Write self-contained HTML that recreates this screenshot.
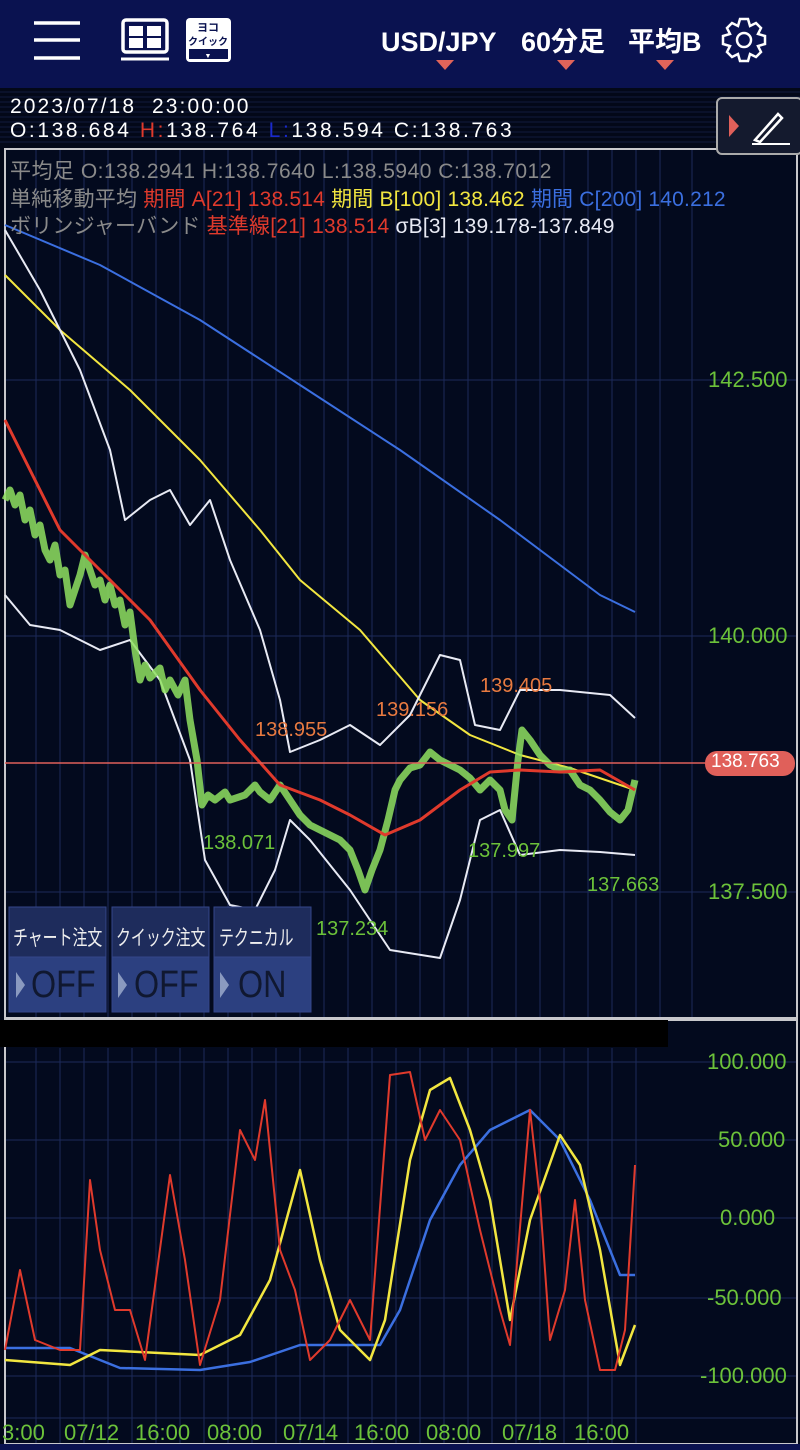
<!DOCTYPE html>
<html><head><meta charset="utf-8"><style>
html,body{margin:0;padding:0;width:800px;height:1450px;overflow:hidden;background:#030818;font-family:"Liberation Sans","Noto Sans CJK JP",sans-serif}
.hdr{position:absolute;left:0;top:0;width:800px;height:88px;background:#0a1250}
.t{position:absolute;white-space:nowrap}
.ax{position:absolute;white-space:nowrap;font-size:22px;color:#6cc23a}
.bt{position:absolute;white-space:nowrap;font-size:21px;color:#eee;transform:scaleX(0.71);transform-origin:left top}
.tm{position:absolute;top:1420px;font-size:22px;color:#6cc23a;white-space:nowrap}
</style></head><body>
<div class="hdr"></div>
<svg width="800" height="1450" style="position:absolute;left:0;top:0">
<g stroke="#fff" stroke-width="3.5"><line x1="34" y1="23" x2="80" y2="23"/><line x1="34" y1="40" x2="80" y2="40"/><line x1="34" y1="58" x2="80" y2="58"/></g>
<rect x="123" y="20" width="44" height="32" rx="3" fill="none" stroke="#fff" stroke-width="3.5"/>
<rect x="129" y="26" width="14" height="10" fill="#fff"/><rect x="147" y="26" width="14" height="10" fill="#fff"/>
<rect x="129" y="38" width="14" height="10" fill="#fff"/><rect x="147" y="38" width="14" height="10" fill="#fff"/>
<line x1="121" y1="59" x2="169" y2="59" stroke="#fff" stroke-width="3"/>
<rect x="186" y="18" width="45" height="44" rx="4" fill="#fff"/>
<rect x="189" y="49" width="39" height="10" fill="#0a1250"/>
<text x="208" y="31" font-size="11" font-weight="bold" fill="#0a1250" text-anchor="middle">ヨコ</text>
<text x="208" y="45" font-size="10" font-weight="bold" fill="#0a1250" text-anchor="middle">クイック</text>
<text x="208" y="58" font-size="7" fill="#fff" text-anchor="middle">▼</text>
<text x="381" y="51" font-size="27" font-weight="bold" fill="#fff">USD/JPY</text>
<text x="521" y="51" font-size="27" font-weight="bold" fill="#fff">60分足</text>
<text x="628" y="51" font-size="27" font-weight="bold" fill="#fff">平均B</text>
<g fill="#e0645a"><polygon points="436,60 454,60 445,70"/><polygon points="557,60 575,60 566,70"/><polygon points="656,60 674,60 665,70"/></g>
<g fill="none" stroke="#fff" stroke-width="2.5"><circle cx="744" cy="40" r="7"/>
<path d="M740 19 L748 19 L750 26 L756 23 L761 28 L758 34 L765 36 L765 44 L758 46 L761 52 L756 57 L750 54 L748 61 L740 61 L738 54 L732 57 L727 52 L730 46 L723 44 L723 36 L730 34 L727 28 L732 23 L738 26 Z"/></g>
<g stroke="#0c1430" stroke-width="1.5">
<line x1="0" y1="92" x2="800" y2="92"/><line x1="0" y1="97" x2="800" y2="97"/><line x1="0" y1="102" x2="800" y2="102"/><line x1="0" y1="107" x2="800" y2="107"/><line x1="0" y1="112" x2="800" y2="112"/><line x1="0" y1="117" x2="800" y2="117"/><line x1="0" y1="122" x2="800" y2="122"/><line x1="0" y1="127" x2="800" y2="127"/><line x1="0" y1="132" x2="800" y2="132"/><line x1="0" y1="137" x2="800" y2="137"/><line x1="0" y1="142" x2="800" y2="142"/></g>
<rect x="5" y="149" width="792" height="869" fill="#030a1e" stroke="#c8c8cc" stroke-width="2"/>
<rect x="5" y="1020" width="792" height="424" fill="#030a1e" stroke="#c8c8cc" stroke-width="2"/>
<rect x="0" y="1020" width="668" height="27" fill="#000"/>
<g stroke="#1c2a5a" stroke-width="1">
<path d="M36 150V1017M60 150V1017M84 150V1017M108 150V1017M132 150V1017M156 150V1017M180 150V1017M204 150V1017M228 150V1017M252 150V1017M276 150V1017M300 150V1017M324 150V1017M348 150V1017M372 150V1017M396 150V1017M420 150V1017M444 150V1017M468 150V1017M492 150V1017M516 150V1017M540 150V1017M564 150V1017M588 150V1017M612 150V1017M636 150V1017M660 150V1017M692 150V1017"/>
<path d="M36 1048V1443M60 1048V1443M84 1048V1443M108 1048V1443M132 1048V1443M156 1048V1443M180 1048V1443M204 1048V1443M228 1048V1443M252 1048V1443M276 1048V1443M300 1048V1443M324 1048V1443M348 1048V1443M372 1048V1443M396 1048V1443M420 1048V1443M444 1048V1443M468 1048V1443M492 1048V1443M516 1048V1443M540 1048V1443M564 1048V1443M588 1048V1443M612 1048V1443M636 1048V1443"/>
<path d="M6 380H796M6 636H796M6 892H796M6 1062H796M6 1140H796M6 1218H796M6 1298H796M6 1376H796M6 1418H796"/>
</g>
<g fill="none" stroke-linejoin="round">
<polyline stroke="#3b6fe0" stroke-width="2" points="5,225 100,265 200,320 300,385 400,450 500,520 600,595 635,612"/>
<polyline stroke="#f2e640" stroke-width="2" points="5,275 60,330 130,390 200,460 260,530 300,580 360,630 420,700 470,735 520,755 570,768 635,790"/>
<polyline stroke="#e8eaf4" stroke-width="2" points="5,230 40,290 80,370 110,450 125,520 150,500 170,490 190,525 210,500 230,560 260,630 280,700 290,752 320,740 350,725 380,745 410,715 440,655 460,660 475,725 500,730 520,690 560,690 610,695 635,718"/>
<polyline stroke="#e8eaf4" stroke-width="2" points="5,595 30,625 60,630 100,650 130,640 160,680 190,760 205,860 230,905 255,910 275,870 290,820 310,840 350,890 390,950 440,958 460,900 480,820 500,810 520,855 560,850 600,852 635,855"/>
<polyline stroke="#8fe060" stroke-width="7" opacity="0.85" points="5,500 10,490 15,505 20,495 25,520 30,510 35,535 40,525 45,550 50,560 55,545 60,575 65,570 70,605 75,590 80,575 85,555 90,570 95,585 100,580 105,600 110,585 115,605 120,600 125,625 130,612 135,650 140,680 145,665 150,678 160,668 165,690 170,680 178,695 185,680 190,720 197,760 202,805 208,795 215,800 225,792 230,800 245,795 255,785 260,792 270,800 280,785 290,800 300,815 310,825 320,830 330,835 340,840 350,850 358,870 365,890 372,870 380,850 388,820 395,790 400,780 410,768 420,765 430,752 440,760 450,765 460,770 470,778 480,790 490,780 500,790 505,810 512,820 518,760 522,730 530,740 540,755 550,765 560,770 570,770 580,785 590,790 600,800 610,812 620,820 628,810 635,780"/>
<polyline stroke="#e03a2c" stroke-width="3" points="5,420 30,470 60,530 100,570 150,620 200,690 240,740 280,785 320,800 350,815 385,835 420,820 460,790 490,772 520,770 560,772 600,770 635,790"/>
<line x1="5" y1="763" x2="705" y2="763" stroke="#e0605a" stroke-width="1.5"/>
<rect x="705" y="751" width="90" height="25" rx="12" fill="#e0605a"/>
<polyline stroke="#3b6fe0" stroke-width="2.5" points="5,1348 70,1348 120,1368 200,1370 250,1362 300,1345 380,1345 400,1310 430,1220 460,1165 490,1130 530,1110 560,1140 590,1200 620,1275 635,1275"/>
<polyline stroke="#f2e640" stroke-width="2.5" points="5,1360 70,1365 100,1350 200,1355 240,1335 270,1280 300,1170 320,1260 340,1330 370,1360 385,1320 410,1160 430,1090 450,1078 470,1130 490,1200 510,1320 530,1220 560,1135 580,1165 600,1250 620,1365 635,1325"/>
<polyline stroke="#e03a2c" stroke-width="2" points="5,1350 20,1270 35,1340 60,1350 80,1350 90,1180 100,1250 115,1310 130,1310 145,1360 170,1175 185,1260 200,1365 220,1300 240,1130 255,1160 265,1100 280,1250 295,1290 310,1360 330,1340 350,1300 370,1340 390,1075 410,1072 425,1140 440,1110 460,1140 480,1230 500,1310 510,1345 530,1110 540,1200 550,1340 565,1290 575,1200 585,1300 600,1370 615,1370 625,1330 635,1165"/>
</g>
<g>
<rect x="9" y="907" width="97" height="50" fill="#1e2c5c" stroke="#34468a"/><rect x="9" y="957" width="97" height="55" fill="#2c4080" stroke="#34468a"/>
<rect x="112" y="907" width="97" height="50" fill="#1e2c5c" stroke="#34468a"/><rect x="112" y="957" width="97" height="55" fill="#2c4080" stroke="#34468a"/>
<rect x="214" y="907" width="97" height="50" fill="#1e2c5c" stroke="#34468a"/><rect x="214" y="957" width="97" height="55" fill="#2c4080" stroke="#34468a"/>
<polygon points="16,972 25,985 16,998" fill="#8a9ac0"/><polygon points="118,972 127,985 118,998" fill="#8a9ac0"/><polygon points="220,972 229,985 220,998" fill="#8a9ac0"/>
</g>
<rect x="717" y="98" width="85" height="56" rx="5" fill="#141a2e" stroke="#aaa" stroke-width="2"/>
<polygon points="729,115 739,126 729,137" fill="#e0605a"/>
<path d="M755 140 L778 114 L782 118 L760 142 Z" fill="none" stroke="#fff" stroke-width="2.5"/>
<line x1="752" y1="144" x2="790" y2="144" stroke="#fff" stroke-width="2"/>
</svg>
<div class="t" style="left:10px;top:95px;font-size:21px;color:#fff;letter-spacing:2.1px">2023/07/18&nbsp; 23:00:00</div>
<div class="t" style="left:10px;top:119px;font-size:21px;color:#fff;letter-spacing:2.6px">O:138.684 <span style="color:#e03a2c">H:</span>138.764 <span style="color:#1a2acc">L:</span>138.594 C:138.763</div>
<div class="t" style="left:10px;top:155px;font-size:21px;color:#8a8a8a;letter-spacing:0.5px">平均足 O:138.2941 H:138.7640 L:138.5940 C:138.7012</div>
<div class="t" style="left:10px;top:183px;font-size:21px;color:#8a8a8a;letter-spacing:0.2px">単純移動平均 <span style="color:#e03a2c">期間 A[21] 138.514</span> <span style="color:#f2e640">期間 B[100] 138.462</span> <span style="color:#3b6fe0">期間 C[200] 140.212</span></div>
<div class="t" style="left:10px;top:210px;font-size:21px;color:#8a8a8a;letter-spacing:0.2px">ボリンジャーバンド <span style="color:#e03a2c">基準線[21] 138.514</span> <span style="color:#e8eaf4">σB[3] 139.178-137.849</span></div>
<div class="ax" style="left:708px;top:367px">142.500</div>
<div class="ax" style="left:708px;top:623px">140.000</div>
<div class="ax" style="left:708px;top:879px">137.500</div>
<div class="t" style="left:711px;top:751px;font-size:19px;color:#fff">138.763</div>
<div class="t" style="left:255px;top:719px;font-size:20px;color:#e87a40">138.955</div>
<div class="t" style="left:376px;top:699px;font-size:20px;color:#e87a40">139.156</div>
<div class="t" style="left:480px;top:675px;font-size:20px;color:#e87a40">139.405</div>
<div class="t" style="left:203px;top:832px;font-size:20px;color:#6cc23a">138.071</div>
<div class="t" style="left:316px;top:918px;font-size:20px;color:#6cc23a">137.234</div>
<div class="t" style="left:468px;top:840px;font-size:20px;color:#6cc23a">137.997</div>
<div class="t" style="left:587px;top:874px;font-size:20px;color:#6cc23a">137.663</div>
<div class="bt" style="left:13px;top:922px">チャート注文</div>
<div class="bt" style="left:116px;top:922px">クイック注文</div>
<div class="bt" style="left:219px;top:922px">テクニカル</div>
<div class="t" style="left:31px;top:964px;font-size:38px;color:#101830;transform:scaleX(0.85);transform-origin:left top">OFF</div>
<div class="t" style="left:134px;top:964px;font-size:38px;color:#101830;transform:scaleX(0.85);transform-origin:left top">OFF</div>
<div class="t" style="left:238px;top:964px;font-size:38px;color:#101830;transform:scaleX(0.85);transform-origin:left top">ON</div>
<div class="ax" style="left:707px;top:1049px">100.000</div>
<div class="ax" style="left:718px;top:1127px">50.000</div>
<div class="ax" style="left:720px;top:1205px">0.000</div>
<div class="ax" style="left:707px;top:1285px">-50.000</div>
<div class="ax" style="left:700px;top:1363px">-100.000</div>
<div class="tm" style="left:2px">3:00</div>
<div class="tm" style="left:64px">07/12</div>
<div class="tm" style="left:135px">16:00</div>
<div class="tm" style="left:207px">08:00</div>
<div class="tm" style="left:283px">07/14</div>
<div class="tm" style="left:354px">16:00</div>
<div class="tm" style="left:426px">08:00</div>
<div class="tm" style="left:502px">07/18</div>
<div class="tm" style="left:574px">16:00</div>
<div style="position:absolute;left:0;top:1444px;width:800px;height:6px;background:#0a1250"></div>
</body></html>
